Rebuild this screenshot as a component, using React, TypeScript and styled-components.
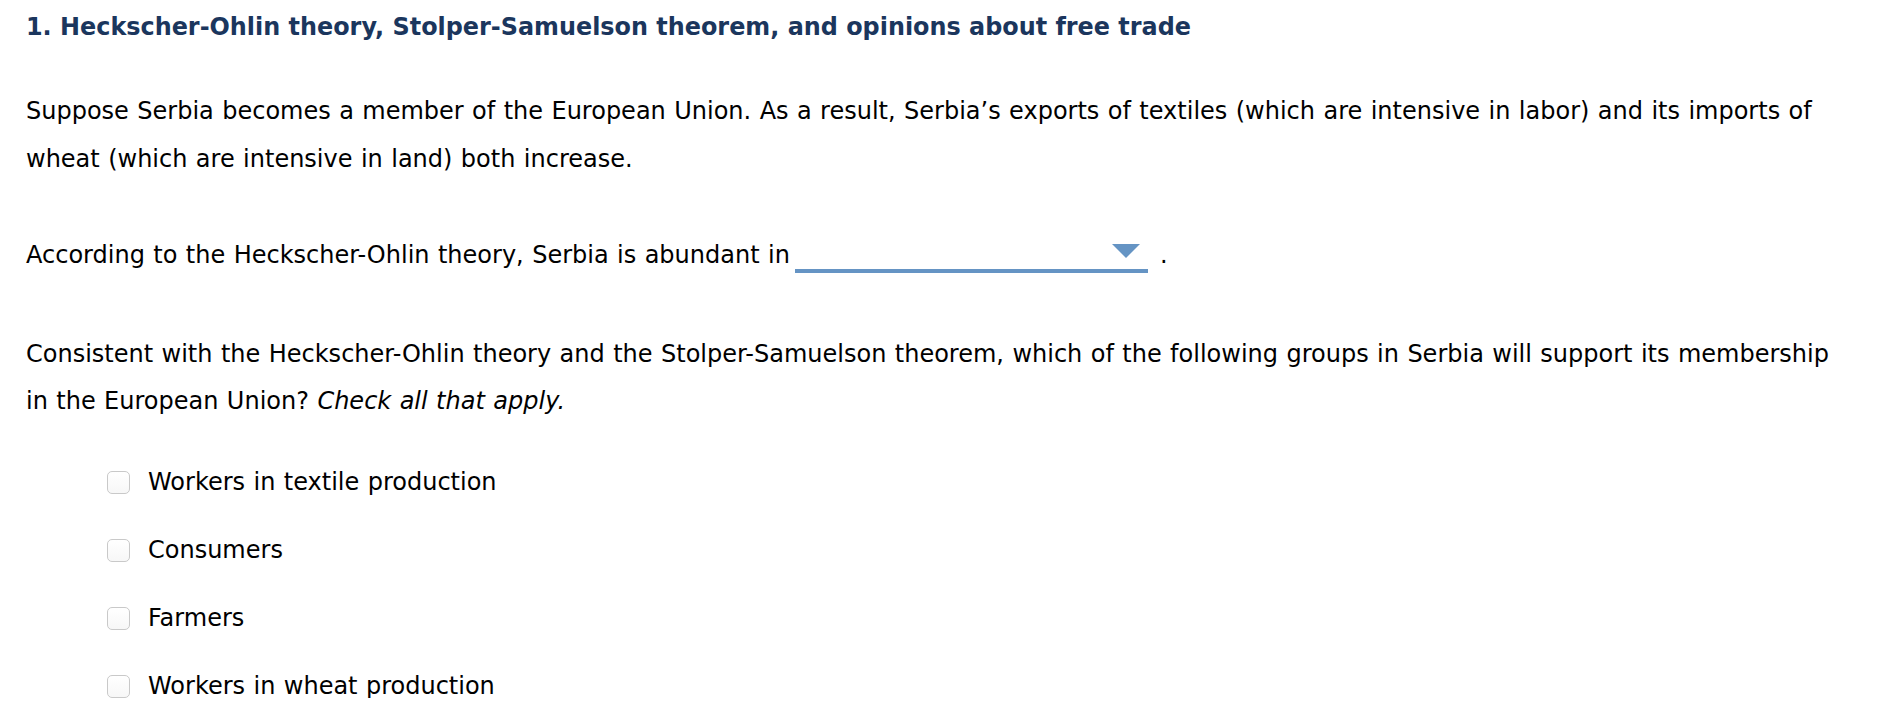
import styled, { createGlobalStyle } from 'styled-components';

const GlobalStyle = createGlobalStyle`
  html, body {
    margin: 0;
    padding: 0;
    background: #ffffff;
  }
  body {
    font-family: 'DejaVu Sans', Verdana, sans-serif;
    color: #000000;
  }
`;

const Page = styled.div`
  padding: 11px 26px 0 26px;
  width: 1815px;
`;

const Title = styled.h1`
  margin: 0;
  font-size: 23.9px;
  line-height: 32px;
  font-weight: bold;
  color: #1b365d;
`;

const Paragraph = styled.p<{ top: number; lh?: number }>`
  margin: ${({ top }) => top}px 0 0 0;
  font-size: 24px;
  line-height: ${({ lh }) => lh ?? 47}px;
  word-spacing: 0.8px;
`;

const Dropdown = styled.span`
  position: relative;
  display: inline-block;
  width: 353px;
  height: 26px;
  margin: 0 12px 0 5px;
  vertical-align: -10px;
  border-bottom: 4px solid #6594c4;
`;

const Caret = styled.span`
  position: absolute;
  right: 8px;
  top: 1px;
  width: 0;
  height: 0;
  border-left: 14px solid transparent;
  border-right: 14px solid transparent;
  border-top: 14px solid #6594c4;
`;

const Options = styled.div`
  display: flex;
  flex-direction: column;
  gap: 45px;
  margin-top: 46px;
  padding-left: 81px;
`;

const Option = styled.label`
  display: flex;
  align-items: center;
  gap: 18px;
  font-size: 24px;
  line-height: 23px;
  word-spacing: 0.8px;
  cursor: pointer;
`;

const Box = styled.input.attrs({ type: 'checkbox' })`
  appearance: none;
  margin: 0;
  width: 23px;
  height: 23px;
  border: 1px solid #c9c9c9;
  border-radius: 5px;
  background: linear-gradient(#ffffff, #f7f7f7);
  flex: none;
`;

const options = [
  'Workers in textile production',
  'Consumers',
  'Farmers',
  'Workers in wheat production',
];

export default function App() {
  return (
    <>
      <GlobalStyle />
      <Page>
        <Title>
          1. Heckscher-Ohlin theory, Stolper-Samuelson theorem, and opinions about free trade
        </Title>
        <Paragraph top={44} lh={48}>
          Suppose Serbia becomes a member of the European Union. As a result, Serbia’s exports of
          textiles (which are intensive in labor) and its imports of wheat (which are intensive in
          land) both increase.
        </Paragraph>
        <Paragraph top={49}>
          According to the Heckscher-Ohlin theory, Serbia is abundant in
          <Dropdown>
            <Caret />
          </Dropdown>
          .
        </Paragraph>
        <Paragraph top={52}>
          Consistent with the Heckscher-Ohlin theory and the Stolper-Samuelson theorem, which of
          the following groups in Serbia will support its membership in the European Union?{' '}
          <i>Check all that apply.</i>
        </Paragraph>
        <Options>
          {options.map((label) => (
            <Option key={label}>
              <Box />
              {label}
            </Option>
          ))}
        </Options>
      </Page>
    </>
  );
}
